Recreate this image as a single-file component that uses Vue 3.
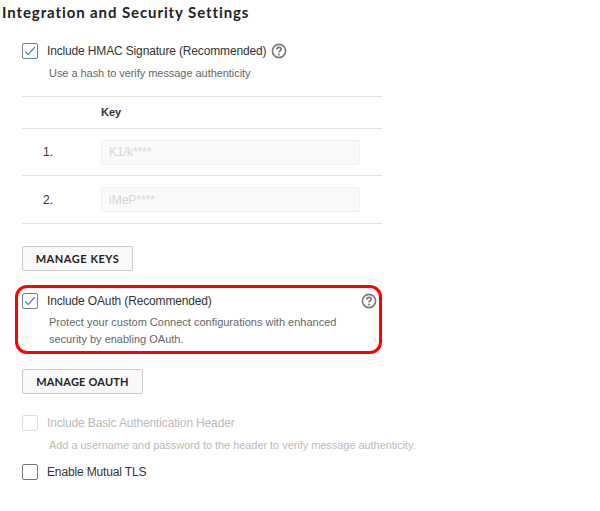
<template>
  <div class="settings">
    <h2 class="title">Integration and Security Settings</h2>

    <div class="section hmac">
      <div class="option">
        <span class="box checked">
          <svg viewBox="0 0 16 16" width="14" height="14" fill="none" stroke="#2468d8" stroke-width="1.2">
            <polyline points="2.5 8.5 6 12 13.5 3.5"/>
          </svg>
        </span>
        <span class="label">Include HMAC Signature (Recommended)</span>
        <svg class="help" viewBox="0 0 16 16" width="16" height="16" fill="none" stroke="#777">
          <circle cx="8" cy="8" r="6.6" stroke-width="1.6"/>
          <path d="M5.9 6.4c0-1.3 1-2 2.2-2s2.1.8 2.1 1.9c0 1.6-2.2 1.6-2.2 3.2" stroke-width="1.7"/>
          <circle cx="8" cy="11.6" r="1" fill="#777" stroke="none"/>
        </svg>
      </div>
      <p class="hint">Use a hash to verify message authenticity</p>
    </div>

    <div class="keys">
      <div class="key-head"><span class="key-title">Key</span></div>
      <div v-for="(k, i) in keys" :key="k" class="key-row">
        <span class="key-num">{{ i + 1 }}.</span>
        <input class="key-input" :value="k" disabled />
      </div>
    </div>

    <button class="btn keys-btn">MANAGE KEYS</button>

    <div class="oauth">
      <div class="option">
        <span class="box checked">
          <svg viewBox="0 0 16 16" width="14" height="14" fill="none" stroke="#2468d8" stroke-width="1.2">
            <polyline points="2.5 8.5 6 12 13.5 3.5"/>
          </svg>
        </span>
        <span class="label">Include OAuth (Recommended)</span>
        <svg class="help right" viewBox="0 0 16 16" width="16" height="16" fill="none" stroke="#777">
          <circle cx="8" cy="8" r="6.6" stroke-width="1.6"/>
          <path d="M5.9 6.4c0-1.3 1-2 2.2-2s2.1.8 2.1 1.9c0 1.6-2.2 1.6-2.2 3.2" stroke-width="1.7"/>
          <circle cx="8" cy="11.6" r="1" fill="#777" stroke="none"/>
        </svg>
      </div>
      <p class="hint oauth-hint">Protect your custom Connect configurations with enhanced security by enabling OAuth.</p>
    </div>

    <button class="btn oauth-btn">MANAGE OAUTH</button>

    <div class="option basic disabled">
      <span class="box"></span>
      <span class="label">Include Basic Authentication Header</span>
    </div>
    <p class="hint disabled basic-hint">Add a username and password to the header to verify message authenticity.</p>

    <div class="option tls">
      <span class="box dark"></span>
      <span class="label">Enable Mutual TLS</span>
    </div>
  </div>
</template>

<script setup>
const keys = ['K1/k****', 'iMeP****']
</script>

<style scoped>
.settings {
  width: 600px;
  height: 511px;
  overflow: hidden;
  box-sizing: border-box;
  padding: 3px 0 0 22px;
  font-family: "Liberation Sans", Arial, sans-serif;
  font-size: 12px;
  color: #333;
  background: #fff;
}

.title {
  margin: 0 0 0 -20px;
  font-family: Lato, sans-serif;
  font-size: 15px;
  font-weight: 700;
  line-height: 18px;
  letter-spacing: 0.9px;
  color: #222;
}

.section {
  width: 360px;
}

.hmac {
  margin-top: 22px;
}

.option {
  display: flex;
  align-items: center;
  height: 16px;
}

.box {
  width: 14px;
  height: 14px;
  border: 1px solid #aaa;
  border-radius: 2px;
  margin-right: 9px;
  display: flex;
  align-items: center;
  justify-content: center;
  flex-shrink: 0;
}

.box.checked {
  border-color: #6f7f95;
}

.box.dark {
  border-color: #777;
}

.label {
  line-height: 16px;
  letter-spacing: -0.15px;
}

.help {
  margin-left: 5px;
}

.help.right {
  margin-left: auto;
}

.hint {
  margin: 6px 0 0 27px;
  font-size: 11px;
  line-height: 16px;
  letter-spacing: -0.05px;
  color: #666;
}

.keys {
  width: 360px;
  margin-top: 15px;
  border-top: 1px solid #e2e2e2;
}

.key-head {
  height: 31px;
  box-sizing: content-box;
  display: flex;
  align-items: center;
  padding-left: 79px;
  border-bottom: 1px solid #e2e2e2;
}

.key-title {
  margin-top: -2px;
  font-size: 11px;
  font-weight: 700;
  color: #333;
}

.key-row {
  height: 47px;
  display: flex;
  align-items: center;
  border-bottom: 1px solid #e2e2e2;
}

.key-row:nth-child(2) {
  height: 46px;
}

.key-num {
  width: 79px;
  box-sizing: border-box;
  padding-left: 21px;
  color: #333;
}

.key-input {
  width: 259px;
  height: 25px;
  box-sizing: border-box;
  padding: 0 7px;
  border: 1px solid #f0f0f0;
  border-radius: 2px;
  background: #fafafa;
  font-family: inherit;
  font-size: 12px;
  color: #d4d4d4;
}

.btn {
  display: block;
  height: 25px;
  box-sizing: border-box;
  padding: 0;
  border: 1px solid #ccc;
  border-radius: 2px;
  background: #f9f9f9;
  font-family: Lato, sans-serif;
  font-size: 11px;
  font-weight: 700;
  letter-spacing: 0.55px;
  color: #222;
}

.keys-btn {
  width: 111px;
  margin-top: 22px;
}

.oauth {
  width: 367px;
  height: 69px;
  box-sizing: border-box;
  margin: 14px 0 0 -7px;
  padding: 5px 2px 0 7px;
  border: 3px solid #f00;
  border-radius: 12px;
}

.oauth .option {
  margin-left: -3px;
}

.oauth-hint {
  margin: 5px 30px 0 24px;
  line-height: 17px;
  letter-spacing: 0;
}

.oauth-btn {
  width: 121px;
  margin-top: 15px;
  letter-spacing: 0.2px;
}

.basic {
  margin-top: 21px;
}

.disabled .label,
.hint.disabled {
  color: #bbb;
}

.disabled .box {
  border-color: #ddd;
}

.basic-hint {
  margin-top: 6px;
}

.tls {
  margin-top: 11px;
}
</style>
